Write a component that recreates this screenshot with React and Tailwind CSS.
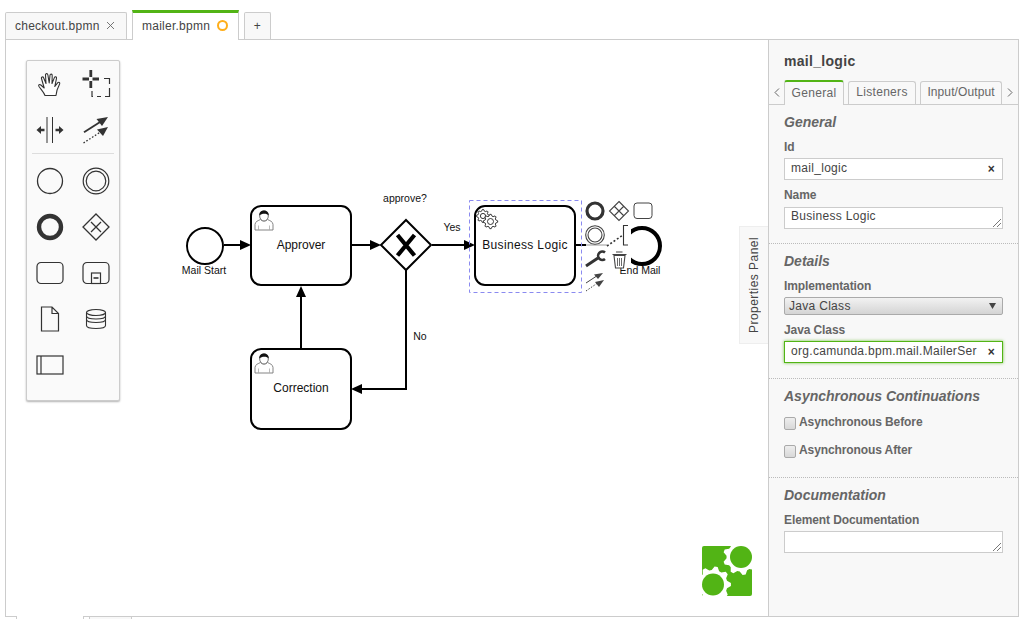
import React from 'react';

const FONT = 'font-["Liberation_Sans",Arial,sans-serif]';

// builds a cog outline, used by the service task marker
function gearPath(cx, cy, outer, inner, teeth) {
  const pts = [];
  const step = (Math.PI * 2) / (teeth * 4);
  for (let i = 0; i < teeth * 4; i++) {
    const r = i % 4 < 2 ? outer : inner;
    const a = i * step - step / 2;
    pts.push(`${(cx + Math.cos(a) * r).toFixed(2)} ${(cy + Math.sin(a) * r).toFixed(2)}`);
  }
  return `M${pts.join('L')}Z`;
}

function UserMarker({ x, y }) {
  return (
    <g transform={`translate(${x} ${y})`}>
      <path d="M1 20V14.5C1 11.5 4.5 10.5 6.5 9.5C8.5 11.5 11.5 11.5 13.5 9.5C15.5 10.5 19 11.5 19 14.5V20Z" fill="#fff" stroke="#777" strokeWidth="0.9" />
      <path d="M4.5 20V15.5M15.5 20V15.5" stroke="#aaa" strokeWidth="0.8" />
      <ellipse cx="10" cy="6" rx="4.3" ry="5" fill="#fff" stroke="#666" strokeWidth="0.9" />
      <path d="M5.3 5.5C5 1.5 8 0.5 10 0.5C12.5 0.5 15 2 14.7 5.5C13 3.2 8 3 5.3 5.5Z" fill="#111" />
    </g>
  );
}

function GearMarker() {
  return (
    <g fill="#fff" stroke="#222" strokeWidth="0.9">
      <path d={gearPath(483, 216, 6.5, 5, 8)} />
      <circle cx="483" cy="216" r="2.6" />
      <path d={gearPath(490.5, 221.5, 7.2, 5.5, 8)} />
      <circle cx="490.5" cy="221.5" r="3" />
    </g>
  );
}

function Arrow({ d }) {
  return <path d={d} fill="#000" stroke="none" />;
}

function Task({ x, y, h, label, spacing = 0 }) {
  return (
    <g>
      <rect x={x} y={y} width="100" height={h} rx="10" fill="#fff" stroke="#000" strokeWidth="2" />
      <text x={x + 50} y={y + h / 2 + 3} textAnchor="middle" fontSize="12" letterSpacing={spacing} fill="#111">{label}</text>
    </g>
  );
}

function Diagram() {
  return (
    <svg width="762" height="576" viewBox="6 40 762 576" className="absolute left-0 top-0" fontFamily="Liberation Sans, Arial, sans-serif">
      {/* edges */}
      <g fill="none" stroke="#000" strokeWidth="2">
        <path d="M224 245H241" />
        <path d="M352 245H371" />
        <path d="M432 245H465" />
        <path d="M406 270V389H362" />
        <path d="M301 349V296" />
        <path d="M576 245H586" />
      </g>
      <path d="M586 245H608" stroke="#999" strokeWidth="1" />
      <Arrow d="M251 245L240 240V250Z" />
      <Arrow d="M381 245L370 240V250Z" />
      <Arrow d="M475 245L464 240V250Z" />
      <Arrow d="M351 389L362 384V394Z" />
      <Arrow d="M301 286L296 297H306Z" />

      <circle cx="205" cy="246" r="18" fill="#fff" stroke="#000" strokeWidth="2" />
      <text x="204" y="274" textAnchor="middle" fontSize="10.5" fill="#111">Mail Start</text>

      <Task x={251} y={206} h={79} label="Approver" />
      <UserMarker x={254} y={210} />
      <Task x={251} y={349} h={80} label="Correction" />
      <UserMarker x={254} y={353} />

      <path d="M406 220L431 245L406 270L381 245Z" fill="#fff" stroke="#000" strokeWidth="2" />
      <path d="M397.5 235L414.5 255.5M414.5 235L397.5 255.5" stroke="#000" strokeWidth="4.2" fill="none" />
      <text x="405" y="202" textAnchor="middle" fontSize="10.5" fill="#111">approve?</text>
      <text x="452" y="231" textAnchor="middle" fontSize="10.5" fill="#111">Yes</text>
      <text x="420" y="340" textAnchor="middle" fontSize="10.5" fill="#111">No</text>

      <Task x={475} y={206} h={79} label="Business Logic" spacing={0.35} />
      <GearMarker />
      <rect x="469.5" y="200.5" width="112" height="92" fill="none" stroke="#8a8af0" strokeWidth="1" strokeDasharray="4 3" />

      {/* end event sits under the context pad */}
      <circle cx="642" cy="246" r="18" fill="#fff" stroke="#000" strokeWidth="4" />
      <text x="640" y="274" textAnchor="middle" fontSize="10.5" fill="#111">End Mail</text>
      <rect x="607" y="222" width="24" height="46" fill="#fff" />

      {/* context pad */}
      <circle cx="595" cy="211" r="8" fill="none" stroke="#333" strokeWidth="3.2" />
      <path d="M619 201.5L628.5 211L619 220.5L609.5 211Z M614.5 206.5L623.5 215.5M623.5 206.5L614.5 215.5" fill="none" stroke="#444" strokeWidth="1.1" />
      <rect x="634" y="203" width="18" height="15.5" rx="3" fill="none" stroke="#444" strokeWidth="1" />
      <circle cx="595" cy="235" r="9.3" fill="#fff" stroke="#444" strokeWidth="1.1" />
      <circle cx="595" cy="235" r="7" fill="none" stroke="#444" strokeWidth="1.1" />
      <path d="M607 246L623 235" stroke="#333" strokeWidth="1.6" strokeDasharray="2 2" fill="none" />
      <path d="M628 225.5H623.5V245H628" stroke="#333" strokeWidth="1.1" fill="none" />
      <path d="M586 266L598 258" stroke="#333" strokeWidth="3" fill="none" />
      <path d="M605 252.5A4.2 4.2 0 1 0 605 259" fill="none" stroke="#333" strokeWidth="2.6" />
      <path d="M614 255.5H625L623.5 268H615.5Z M612.5 254.5H626.5M616 252H622.5" fill="#fff" stroke="#444" strokeWidth="1.1" />
      <path d="M617.5 258V266M619.5 258V266M621.5 258V266" stroke="#444" strokeWidth="0.8" />
      <path d="M586 283L599 274.5" stroke="#444" strokeWidth="1" />
      <path d="M603 273L594 274.5L598 279Z" fill="#444" />
      <path d="M586 291L599 282" stroke="#444" strokeWidth="1" strokeDasharray="1.5 1.5" />
      <path d="M604 280L595 282L599 287Z" fill="#444" />
    </svg>
  );
}

function Logo() {
  return (
    <svg width="50" height="50" viewBox="0 0 50 50" className="absolute left-[696px] top-[506px]">
      <path d="M2 0H48A2 2 0 0 1 50 2V48A2 2 0 0 1 48 50H2A2 2 0 0 1 0 48V2A2 2 0 0 1 2 0Z" fill="#52b415" />
      <path d={gearPath(39, 11, 18, 14.5, 9)} fill="#fff" />
      <path d={gearPath(11, 38.5, 18, 14.5, 9)} fill="#fff" />
      <circle cx="39" cy="11" r="11" fill="#52b415" />
      <circle cx="11" cy="38.5" r="11" fill="#52b415" />
    </svg>
  );
}

const toolIcons = [
  <svg key="hand" width="28" height="28" viewBox="0 0 28 28" fill="#fff" stroke="#333" strokeWidth="1.1" strokeLinejoin="round">
    <path d="M9 25.5C8 22.5 5.5 20 3 16.5C2 15 3.5 14 4.8 15L8.2 18L5.5 8.5C5 6.8 7 6.3 7.6 7.8L10 13.5L9.5 5C9.4 3.2 11.6 3.2 11.9 5L13.2 13L14 5.2C14.2 3.6 16.3 3.8 16.2 5.6L16 13.5L18.4 7.6C19 6.2 20.9 6.8 20.5 8.4L18.8 16.5L21.8 12.7C22.8 11.7 24.3 12.7 23.6 14C22 17 20.5 20.5 20 25.5Z" />
  </svg>,
  <svg key="lasso" width="30" height="30" viewBox="0 0 30 30" fill="none" stroke="#333">
    <path d="M1.5 10H8M11.5 10H18M9.8 1V8M9.8 12V19" strokeWidth="2.8" />
    <path d="M23 9.5H28.5V15M28.5 19V27.5H24M20 27.5H16M12 27.5H11V22" strokeWidth="1.2" />
  </svg>,
  <svg key="space" width="30" height="30" viewBox="0 0 30 30" fill="#333" stroke="none">
    <path d="M11.5 2V28H12.5V2ZM17 2V28H18V2Z" />
    <path d="M1.5 15L6 11V13.8H9.5V16.2H6V19ZM28.5 15L24 11V13.8H20.5V16.2H24V19Z" />
  </svg>,
  <svg key="connect" width="28" height="28" viewBox="0 0 28 28" fill="#333" stroke="none">
    <path d="M1.5 15.5L18 5L19 6.5L2.5 17Z" />
    <path d="M26 1L14.5 3L20 10Z" />
    <path d="M1.5 27L20 15" stroke="#333" strokeWidth="1.3" strokeDasharray="1.6 1.8" fill="none" />
    <path d="M26 11L15 13.5L21 20Z" />
  </svg>,
  <svg key="start" width="28" height="28" viewBox="0 0 28 28" fill="none" stroke="#333"><circle cx="14" cy="14" r="12.5" strokeWidth="1.3" /></svg>,
  <svg key="inter" width="28" height="28" viewBox="0 0 28 28" fill="none" stroke="#333"><circle cx="14" cy="14" r="12.8" strokeWidth="1.2" /><circle cx="14" cy="14" r="9.8" strokeWidth="1.2" /></svg>,
  <svg key="end" width="28" height="28" viewBox="0 0 28 28" fill="none" stroke="#333"><circle cx="14" cy="14" r="11" strokeWidth="4.4" /></svg>,
  <svg key="gateway" width="28" height="28" viewBox="0 0 28 28" fill="none" stroke="#333" strokeWidth="1.3"><path d="M14 1L27 14L14 27L1 14Z" /><path d="M9 9L19 19M19 9L9 19" /></svg>,
  <svg key="task" width="28" height="24" viewBox="0 0 28 24" fill="none" stroke="#333" strokeWidth="1.2"><rect x="1" y="1.5" width="26" height="21" rx="4" /></svg>,
  <svg key="sub" width="28" height="24" viewBox="0 0 28 24" fill="none" stroke="#333" strokeWidth="1.2"><rect x="1" y="1.5" width="26" height="21" rx="4" /><rect x="9.5" y="12" width="9" height="10.5" /><path d="M11.5 17H16.5" strokeWidth="1.6" /></svg>,
  <svg key="data" width="20" height="26" viewBox="0 0 20 26" fill="none" stroke="#333" strokeWidth="1.2"><path d="M1.5 1H12L18.5 7.5V25H1.5ZM12 1V7.5H18.5" /></svg>,
  <svg key="store" width="22" height="22" viewBox="0 0 22 22" fill="none" stroke="#333" strokeWidth="1.1"><ellipse cx="11" cy="4.5" rx="9.5" ry="3" /><path d="M1.5 4.5V17.5C1.5 19.5 5.5 20.5 11 20.5C16.5 20.5 20.5 19.5 20.5 17.5V4.5" /><path d="M1.5 8C1.5 10 5.5 11 11 11C16.5 11 20.5 10 20.5 8M1.5 11.5C1.5 13.5 5.5 14.5 11 14.5C16.5 14.5 20.5 13.5 20.5 11.5" /></svg>,
  <svg key="pool" width="28" height="20" viewBox="0 0 28 20" fill="none" stroke="#333" strokeWidth="1.2"><rect x="1" y="1" width="26" height="18" /><path d="M5 1V19" /></svg>,
];

function Palette() {
  return (
    <div className="absolute left-[20px] top-[20px] h-[341px] w-[94px] rounded-[2px] border border-[#ccc] bg-[#fafafa] shadow-[0_1px_2px_rgba(0,0,0,0.3)]">
      <div className="grid grid-cols-[46px_46px] auto-rows-[46px]">
        {toolIcons.slice(0, 4).map((icon, i) => (
          <div key={i} className="flex items-center justify-center">{icon}</div>
        ))}
      </div>
      <div className="mx-[5px] mb-[4px] h-px bg-[#ddd]" />
      <div className="grid grid-cols-[46px_46px] auto-rows-[46px]">
        {toolIcons.slice(4).map((icon, i) => (
          <div key={i} className="flex items-center justify-center">{icon}</div>
        ))}
      </div>
    </div>
  );
}

function ResizeGrip() {
  return (
    <svg width="8" height="8" viewBox="0 0 8 8" className="absolute bottom-px right-px" stroke="#555" strokeWidth="0.8">
      <path d="M0 8L8 0M4 8L8 4" />
    </svg>
  );
}

function SectionTitle({ children, className = '' }) {
  return <h3 className={`text-[14px] font-bold italic leading-[18px] text-[#666] ${className}`}>{children}</h3>;
}

function FieldLabel({ children, className = '' }) {
  return <label className={`block text-[12px] font-bold leading-[14px] tracking-[-0.1px] text-[#666] ${className}`}>{children}</label>;
}

function TextRow({ value, focused }) {
  return (
    <div className={`flex h-[22px] items-center justify-between bg-white pl-[6px] pr-[7px] text-[12px] tracking-[0.3px] text-[#444] ${focused ? 'border border-[#52b415] shadow-[0_0_3px_rgba(82,180,21,0.8)]' : 'border border-[#ccc]'}`}>
      <span className="pb-[2px]">{value}</span>
      <span className="text-[12px] font-bold leading-none text-[#333]">×</span>
    </div>
  );
}

function TextArea({ value }) {
  return (
    <div className="relative h-[22px] border border-[#ccc] bg-white pl-[6px] text-[12px] leading-[17px] tracking-[0.3px] text-[#444]">
      {value}
      <ResizeGrip />
    </div>
  );
}

function CheckRow({ label, className = '' }) {
  return (
    <div className={`flex items-start gap-[3px] ${className}`}>
      <span className="mt-[2px] h-[13px] w-[12px] rounded-[2px] border border-[#aaa] bg-[linear-gradient(#eee,#d8d8d8)]" />
      <span className="text-[12px] font-bold leading-[14px] tracking-[-0.1px] text-[#666]">{label}</span>
    </div>
  );
}

function Chevron({ flip }) {
  return (
    <svg width="6" height="9" viewBox="0 0 6 9" fill="none" stroke="#666" className={flip ? 'rotate-180' : ''}>
      <path d="M5 0.5L1 4.5L5 8.5" />
    </svg>
  );
}

function PropertiesPanel() {
  return (
    <aside className="h-full w-[250px] shrink-0 border-l border-[#ccc] bg-[#f8f8f8]">
      <div className="h-[40px] pl-[15px] pt-[13px] text-[14px] font-bold leading-[16px] tracking-[0.3px] text-[#444]">mail_logic</div>

      <div className="flex h-[25px] items-end border-b border-[#ccc] text-[12px] tracking-[0.3px] text-[#666]">
        <span className="flex h-[24px] w-[15px] items-center justify-center"><Chevron /></span>
        <span className="-mb-px flex h-[25px] w-[60px] items-center justify-center rounded-t-[3px] border-x border-t-2 border-x-[#ccc] border-t-[#52b415] bg-[#f8f8f8] pb-px">General</span>
        <span className="ml-[4px] flex h-[23px] w-[68px] items-center justify-center rounded-t-[3px] border-x border-t border-[#ccc] pb-[2px]">Listeners</span>
        <span className="ml-[4px] flex h-[23px] w-[82px] items-center justify-center rounded-t-[3px] border-x border-t border-[#ccc] pb-[2px] tracking-[0.1px]">Input/Output</span>
        <span className="flex h-[24px] flex-1 items-center justify-center"><Chevron flip /></span>
      </div>

      <section className="h-[139px] border-b border-dotted border-[#bbb] pl-[15px] pr-[15px] pt-[8px]">
        <SectionTitle>General</SectionTitle>
        <FieldLabel className="mt-[9px]">Id</FieldLabel>
        <div className="mt-[4px]"><TextRow value="mail_logic" /></div>
        <FieldLabel className="mt-[8px]">Name</FieldLabel>
        <div className="mt-[5px]"><TextArea value="Business Logic" /></div>
      </section>

      <section className="h-[135px] border-b border-dotted border-[#bbb] pl-[15px] pr-[15px] pt-[8px]">
        <SectionTitle>Details</SectionTitle>
        <FieldLabel className="mt-[9px]">Implementation</FieldLabel>
        <div className="mt-[4px] flex h-[18px] items-center justify-between rounded-[2px] border border-[#aaa] bg-[linear-gradient(#f2f2f2,#d4d4d4)] pb-px pl-[4px] pr-[6px] text-[12px] tracking-[0.3px] text-[#444]">
          <span>Java Class</span>
          <svg width="7" height="6" viewBox="0 0 7 6" fill="#444"><path d="M0 0H7L3.5 6Z" /></svg>
        </div>
        <FieldLabel className="mt-[8px]">Java Class</FieldLabel>
        <div className="mt-[4px]"><TextRow value="org.camunda.bpm.mail.MailerSer" focused /></div>
      </section>

      <section className="h-[99px] border-b border-dotted border-[#bbb] pl-[15px] pr-[15px] pt-[8px]">
        <SectionTitle>Asynchronous Continuations</SectionTitle>
        <CheckRow label="Asynchronous Before" className="mt-[10px]" />
        <CheckRow label="Asynchronous After" className="mt-[13px]" />
      </section>

      <section className="pl-[15px] pr-[15px] pt-[8px]">
        <SectionTitle>Documentation</SectionTitle>
        <FieldLabel className="mt-[9px]">Element Documentation</FieldLabel>
        <div className="mt-[4px]"><TextArea value="" /></div>
      </section>
    </aside>
  );
}

export default function App() {
  return (
    <div className={`flex h-[619px] w-[1024px] flex-col overflow-hidden bg-white ${FONT}`}>
      {/* file tabs */}
      <div className="relative z-10 flex h-[40px] shrink-0 items-end pl-[5px] text-[12px] tracking-[0.25px] text-[#444]">
        <div className="mb-px flex h-[27px] w-[122px] items-center rounded-t-[2px] border-x border-t border-[#ccc] bg-[#f8f8f8] pb-px pl-[9px]">
          <span>checkout.bpmn</span>
          <svg width="9" height="9" viewBox="0 0 9 9" className="ml-[6px]" stroke="#666" strokeWidth="0.9"><path d="M1 1L8 8M8 1L1 8" /></svg>
        </div>
        <div className="ml-[5px] flex h-[30px] w-[107px] items-center border-x border-[#ccc] border-t-[3px] border-t-[#52b415] bg-white pb-px pl-[9px]">
          <span>mailer.bpmn</span>
          <span className="mb-[2px] ml-[7px] h-[11px] w-[11px] rounded-full border-2 border-[#ffae1a]" />
        </div>
        <div className="mb-px ml-[5px] flex h-[27px] w-[27px] items-center justify-center rounded-t-[2px] border-x border-t border-[#ccc] bg-[#f8f8f8] pb-px">+</div>
      </div>

      {/* editor */}
      <main className="-mt-px ml-[5px] flex h-[578px] w-[1014px] shrink-0 border border-[#ccc]">
        <div className="relative h-full flex-1 overflow-hidden">
          <Diagram />
          <Palette />
          <div className="absolute left-[733px] top-[186px] flex h-[118px] w-[30px] items-center justify-center border-y border-l border-[#eee] bg-[#f8f8f8] pr-[2px] text-[12px] tracking-[0.45px] text-[#444]">
            <span className="rotate-180 [writing-mode:vertical-rl]">Properties Panel</span>
          </div>
          <Logo />
        </div>
        <PropertiesPanel />
      </main>

      {/* bottom tabs, almost out of view */}
      <div className="relative ml-[16px] flex h-[3px]">
        <div className="-mt-px h-[3px] w-[68px] border-x border-[#ccc] bg-white" />
        <div className="h-[2px] w-[6px] border-r border-[#ccc]" />
        <div className="h-[2px] w-[42px] border-r border-[#ccc] bg-[#f8f8f8]" />
      </div>
    </div>
  );
}
